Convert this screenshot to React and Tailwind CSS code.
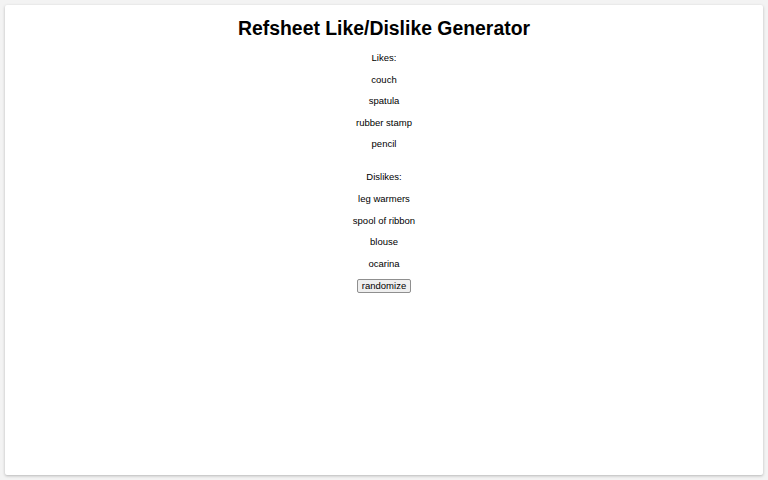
export default function App() {
  const likes = ["couch", "spatula", "rubber stamp", "pencil"];
  const dislikes = ["leg warmers", "spool of ribbon", "blouse", "ocarina"];
  return (
    <div className="h-[480px] w-[768px] bg-[#f3f3f3] p-[5px]" style={{ fontFamily: '"Liberation Sans", Arial, sans-serif' }}>
      <div className="flex h-[470px] flex-col items-center rounded-[2px] bg-white text-black shadow-[0_1px_3px_rgba(0,0,0,0.25)]">
        <h1 className="mt-[11px] text-[19.4px] font-bold leading-[24px]">Refsheet Like/Dislike Generator</h1>
        <div className="mt-[7px] flex flex-col items-center text-[9.5px]">
          <p className="leading-[21.6px]">Likes:</p>
          {likes.map((t) => (
            <p key={t} className="leading-[21.6px]">{t}</p>
          ))}
        </div>
        <div className="mt-[11.5px] flex flex-col items-center text-[9.5px]">
          <p className="leading-[21.6px]">Dislikes:</p>
          {dislikes.map((t) => (
            <p key={t} className="leading-[21.6px]">{t}</p>
          ))}
          <button className="mt-[5px] rounded-[2px] border border-[#8f8f8f] bg-[#efefef] px-[4px] text-[9.5px] leading-[12px] text-black">
            randomize
          </button>
        </div>
      </div>
    </div>
  );
}
